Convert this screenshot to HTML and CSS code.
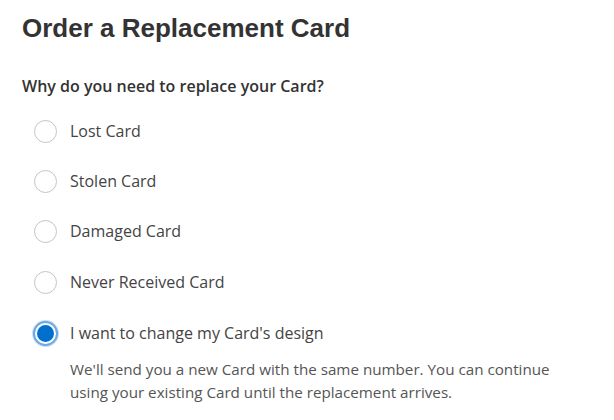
FILE: index.html
```html
<!DOCTYPE html>
<html lang="en">
<head>
    <meta charset="UTF-8">
    <meta name="viewport" content="width=device-width, initial-scale=1.0">
    <title>Order a Replacement Card</title>
    <link rel="stylesheet" href="styles.css">
</head>
<body>
    <div class="container">
        <h1>Order a Replacement Card</h1>
        <div class="reasons" role="radiogroup" aria-labelledby="reason-title">
            <p class="question" id="reason-title">Why do you need to replace your Card?</p>

            <label class="option">
                <input type="radio" name="reason" value="lost">
                <span class="dot"></span>
                <span class="label-text">Lost Card</span>
            </label>
            <label class="option">
                <input type="radio" name="reason" value="stolen">
                <span class="dot"></span>
                <span class="label-text">Stolen Card</span>
            </label>
            <label class="option">
                <input type="radio" name="reason" value="damaged">
                <span class="dot"></span>
                <span class="label-text">Damaged Card</span>
            </label>
            <label class="option">
                <input type="radio" name="reason" value="never-received">
                <span class="dot"></span>
                <span class="label-text">Never Received Card</span>
            </label>
            <label class="option">
                <input type="radio" name="reason" value="design" checked>
                <span class="dot"></span>
                <span class="label-text">I want to change my Card's design</span>
            </label>
            <p class="hint">We'll send you a new Card with the same number. You can continue using your existing Card until the replacement arrives.</p>
        </div>
    </div>
</body>
</html>
```

FILE: styles.css
```css
body {
    font-family: 'Open Sans', 'Liberation Sans', sans-serif;
    background-color: #fff;
    color: #333;
    margin: 0;
}

.container {
    padding: 13px 22px 0;
}

h1 {
    font-family: 'Liberation Sans', Arial, sans-serif;
    font-size: 26px;
    line-height: 30px;
    font-weight: bold;
    color: #333;
    margin: 0 0 32px;
}

.question {
    margin: 0 0 9px;
    font-size: 16px;
    line-height: 22px;
    font-weight: 600;
    color: #333;
}

.option {
    display: flex;
    align-items: center;
    gap: 13px;
    height: 50px;
    padding-left: 12px;
    cursor: pointer;
}

.option:nth-of-type(n+4) {
    margin-top: 1px;
}

.option input {
    position: absolute;
    opacity: 0;
}

.dot {
    width: 21px;
    height: 21px;
    border: 1px solid #c4c4c4;
    border-radius: 50%;
    background: #fff;
    flex-shrink: 0;
}

.option input:checked + .dot {
    width: 17px;
    height: 17px;
    border: 2px solid #fff;
    background: #006fcf;
    box-shadow: 0 0 0 2px #6aa9e6, 0 0 0 3px #c7def5;
    margin: 0 1px;
}

.label-text {
    font-size: 16px;
    color: #444;
}

.hint {
    max-width: 490px;
    margin: 0 0 0 48px;
    font-size: 15.2px;
    line-height: 23px;
    color: #555;
}
```
